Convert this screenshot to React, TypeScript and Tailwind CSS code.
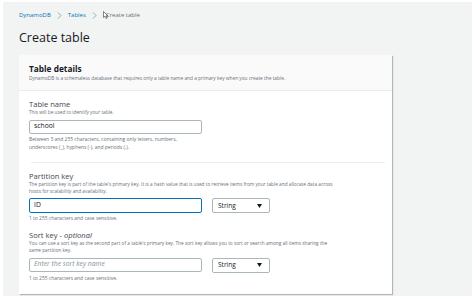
import React from "react";

const font = { fontFamily: '"Open Sans", "Noto Sans", sans-serif' };

function Chevron() {
  return (
    <svg width="5" height="7" viewBox="0 0 5 7" className="mx-[6px]">
      <path d="M1 0.5 L4 3.5 L1 6.5" fill="none" stroke="#879596" strokeWidth="0.8" />
    </svg>
  );
}

function Pointer() {
  return (
    <svg width="6" height="8" viewBox="0 0 6 8" className="-mr-[3px] relative z-10">
      <path d="M0.5 0.5 L0.5 6.5 L2 5.2 L3.2 7.5 L4.2 7 L3 4.8 L5 4.8 Z" fill="#fff" stroke="#333" strokeWidth="0.6" />
    </svg>
  );
}

function Select() {
  return (
    <div className="w-[58px] h-[15px] border border-[#aab7b8] rounded-[2px] bg-white flex items-center justify-between pl-[5px] pr-[7px]">
      <span className="text-[6.5px] text-[#16191f]">String</span>
      <svg width="5" height="4" viewBox="0 0 5 4">
        <path d="M0 0 L5 0 L2.5 4 Z" fill="#16191f" />
      </svg>
    </div>
  );
}

function Field({
  label,
  desc,
  value,
  placeholder,
  focused,
  help,
  select,
}: {
  label: React.ReactNode;
  desc: string[];
  value?: string;
  placeholder?: string;
  focused?: boolean;
  help: string[];
  select?: boolean;
}) {
  return (
    <div className="flex flex-col">
      <div className="text-[7.6px] leading-[9px] text-[#3f464d]">{label}</div>
      {desc.map((d) => (
        <div key={d} className="text-[4.75px] leading-[7px] text-[#687078]">
          {d}
        </div>
      ))}
      <div className="flex gap-[10px] mt-[3.5px]">
        <div
          className={
            focused
              ? "w-[173px] h-[15px] border-[1.5px] border-[#0073bb] rounded-[2px] bg-white flex items-center pl-[4px]"
              : "w-[173px] h-[14px] border border-[#aab7b8] rounded-[2px] bg-white flex items-center pl-[4px]"
          }
        >
          {value ? (
            <span className="text-[6.8px] text-[#16191f]">{value}</span>
          ) : (
            <span className="text-[6.8px] italic text-[#879596]">{placeholder}</span>
          )}
        </div>
        {select && <Select />}
      </div>
      <div className="mt-[1px]">
        {help.map((h) => (
          <div key={h} className="text-[4.95px] leading-[8px] text-[#687078]">
            {h}
          </div>
        ))}
      </div>
    </div>
  );
}

export default function App() {
  return (
    <div className="w-[474px] h-[299px] bg-white pt-[2px] pl-[3px] pr-[2px] pb-[3px]" style={font}>
      <div className="h-full bg-[#f2f3f3] px-[16px] overflow-hidden flex flex-col">
        <div className="flex items-center h-[8px] mt-[9px] text-[6px] leading-[8px]">
          <span className="text-[#0073bb]">DynamoDB</span>
          <Chevron />
          <span className="text-[#0073bb]">Tables</span>
          <Chevron />
          <Pointer />
          <span className="text-[#687078]">Create table</span>
        </div>
        <h1 className="text-[12.5px] leading-[16px] text-[#16191f] mt-[11px]">Create table</h1>

        <div className="w-[373px] mt-[9px] bg-white shadow-[1px_1px_1px_rgba(0,0,0,0.25)]">
          <div className="bg-[#fafafa] border-b border-[#eaeded] px-[10px] pt-[9px] pb-[8px]">
            <div className="text-[8.3px] leading-[10px] font-bold text-[#16191f]">Table details</div>
            <div className="text-[4.8px] leading-[7px] text-[#687078] mt-[1px]">
              DynamoDB is a schemaless database that requires only a table name and a primary key when you create the table.
            </div>
          </div>
          <div className="px-[10px] pt-[9px] pb-[12px]">
            <Field
              label="Table name"
              desc={["This will be used to identify your table."]}
              value="school"
              help={[
                "Between 3 and 255 characters, containing only letters, numbers,",
                "underscores (_), hyphens (-), and periods (.).",
              ]}
            />
            <div className="border-t border-[#eaeded] ml-[2px] mr-[-3px] mt-[11px] mb-[9px]" />
            <Field
              label="Partition key"
              desc={[
                "The partition key is part of the table's primary key. It is a hash value that is used to retrieve items from your table and allocate data across",
                "hosts for scalability and availability.",
              ]}
              value="ID"
              focused
              select
              help={["1 to 255 characters and case sensitive."]}
            />
            <div className="h-[9px]" />
            <Field
              label={
                <>
                  Sort key - <i>optional</i>
                </>
              }
              desc={[
                "You can use a sort key as the second part of a table's primary key. The sort key allows you to sort or search among all items sharing the",
                "same partition key.",
              ]}
              placeholder="Enter the sort key name"
              select
              help={["1 to 255 characters and case sensitive."]}
            />
          </div>
        </div>
      </div>
    </div>
  );
}
